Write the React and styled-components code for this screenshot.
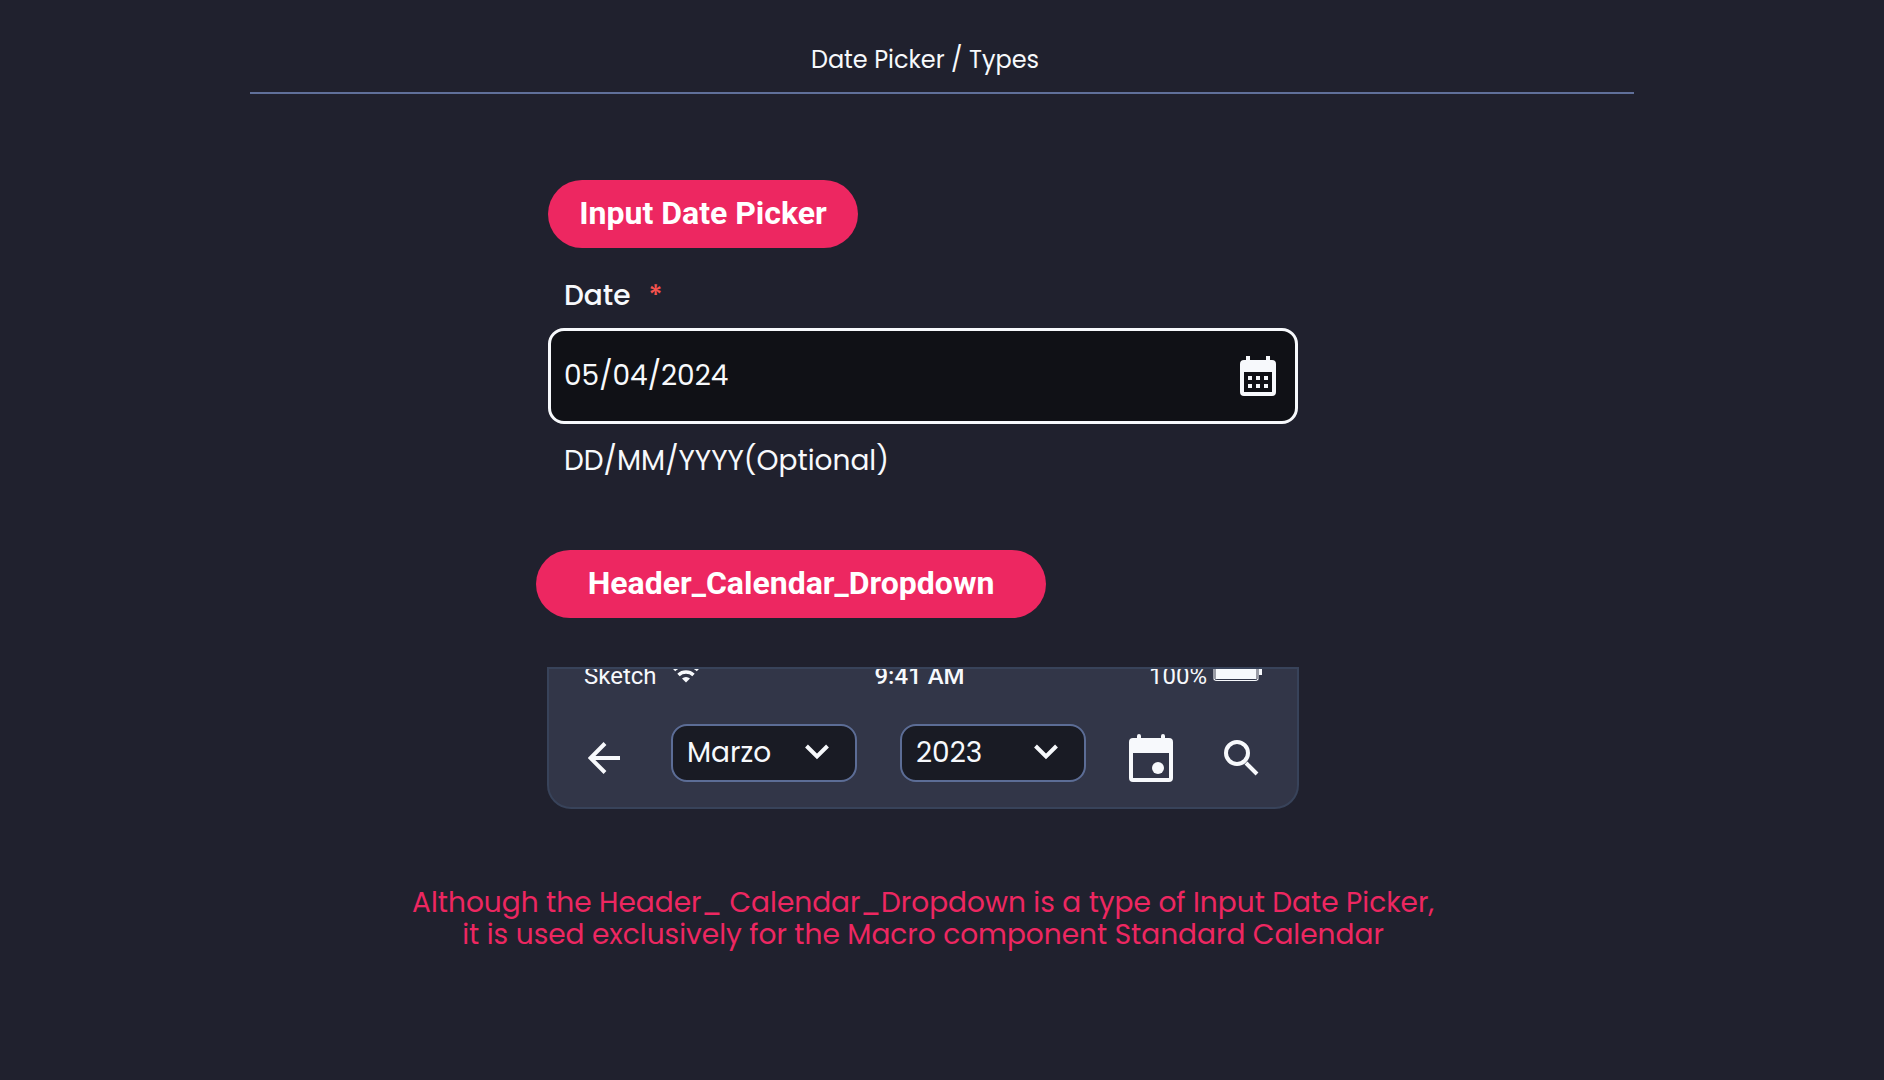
import React from "react";
import styled, { createGlobalStyle } from "styled-components";

const GlobalStyle = createGlobalStyle`
  * { box-sizing: border-box; }
  body {
    margin: 0;
    background: #20212e;
    color: #f7f9fc;
    font-family: Poppins, Inter, "Open Sans", sans-serif;
    font-weight: 400;
  }
`;

const Page = styled.div`
  min-height: 100vh;
  display: flex;
  flex-direction: column;
  align-items: center;
`;

const Header = styled.header`
  width: 100%;
  max-width: 1384px;
  padding: 40px 34px 12px 0;
  border-bottom: 2px solid #60709a;
  text-align: center;
`;

const Title = styled.h1`
  margin: 0;
  font-size: 24px;
  line-height: 40px;
  font-weight: 400;
`;

const Main = styled.main`
  width: 100%;
  max-width: 1384px;
  padding: 86px 38px 0 0;
  display: flex;
  flex-direction: column;
  align-items: center;
`;

const Section = styled.section`
  width: 100%;
  max-width: 750px;
  display: flex;
  flex-direction: column;
  align-items: stretch;
  margin-bottom: ${(p) => p.$gap}px;
`;

const Badge = styled.h2`
  align-self: flex-start;
  margin: 0 0 0 ${(p) => p.$shift || 0}px;
  width: ${(p) => p.$width}px;
  height: 68px;
  border-radius: 34px;
  background: #ed2761;
  color: #ffffff;
  font: 700 32px/66px Roboto, sans-serif;
  text-align: center;
  white-space: nowrap;
`;

const Label = styled.label`
  display: flex;
  gap: 18px;
  padding: 28px 16px 12px;
  font-size: 28px;
  line-height: 40px;
  font-weight: 500;
`;

const Required = styled.span`
  color: #f4524d;
`;

const Field = styled.div`
  display: flex;
  align-items: center;
  height: 96px;
  padding: 0 19px 0 13px;
  border: 3px solid #f7f9fc;
  border-radius: 16px;
  background: #101116;
`;

const DateInput = styled.input`
  flex: 1;
  min-width: 0;
  padding: 0;
  border: 0;
  outline: 0;
  background: transparent;
  color: inherit;
  font: inherit;
  font-size: 28px;
`;

const IconButton = styled.button`
  display: flex;
  align-items: center;
  height: 48px;
  padding: 0;
  border: 0;
  background: transparent;
  color: inherit;
`;

const Hint = styled.p`
  margin: 0;
  padding: 16px 16px 0;
  font-size: 28px;
  line-height: 42px;
`;

const Calendar = styled.div`
  margin: 49px -1px 0;
  height: 142px;
  border: 2px solid #38435a;
  border-radius: 0 0 24px 24px;
  background: #323648;
  overflow: hidden;
`;

const StatusBar = styled.div`
  display: grid;
  grid-template-columns: 1fr auto 1fr;
  margin-top: -8px;
  padding: 0 34px 0 35px;
  font: 400 24px/30px Roboto, sans-serif;
`;

const StatusGroup = styled.div`
  display: flex;
  align-items: flex-start;
  justify-content: ${(p) => (p.$end ? "flex-end" : "flex-start")};
  gap: ${(p) => (p.$end ? 6 : 16)}px;
`;

const Clock = styled.span`
  padding-right: 8px;
  font-weight: 500;
`;

const Toolbar = styled.div`
  display: flex;
  align-items: flex-end;
  justify-content: space-between;
  padding: 33px 37px 0 39px;
`;

const ToolbarCenter = styled.div`
  display: flex;
  align-items: flex-end;
  gap: 43px;
`;

const Picker = styled.div`
  position: relative;
  width: 186px;

  svg {
    position: absolute;
    top: 20px;
    right: 28px;
    pointer-events: none;
  }
`;

const Select = styled.select`
  appearance: none;
  display: block;
  width: 100%;
  height: 58px;
  padding: 0 48px 2px 14px;
  border: 2px solid #5c6d96;
  border-radius: 16px;
  background: #191b24;
  color: inherit;
  font: inherit;
  font-size: 28px;
`;

const Note = styled.p`
  margin: 0;
  color: #ed2761;
  font-size: 28px;
  line-height: 32px;
  text-align: center;
`;

function CalendarGridIcon() {
  return (
    <svg width="36" height="40" viewBox="0 0 36 40" fill="currentColor" aria-hidden="true">
      <path fillRule="evenodd" d="M6 0h4v4h16V0h4v4h2a4 4 0 0 1 4 4v28a4 4 0 0 1-4 4H4a4 4 0 0 1-4-4V8a4 4 0 0 1 4-4h2zM4 16v20h28V16z" />
      <path d="M8 20h4v4H8zM16 20h4v4h-4zM24 20h4v4h-4zM8 28h4v4H8zM16 28h4v4h-4zM24 28h4v4h-4z" />
    </svg>
  );
}

function WifiIcon() {
  return (
    <svg width="26" height="22" viewBox="0 0 26 22" fill="none" stroke="currentColor" strokeWidth="3.5" aria-hidden="true">
      <path d="M1 9a17.500 17.500 0 0 1 24 0" />
      <path d="M5.500 14a11 11 0 0 1 15 0" />
      <path d="M9 17.500a6 6 0 0 1 8 0L13 21.500z" fill="currentColor" stroke="none" />
    </svg>
  );
}

function BatteryIcon() {
  return (
    <svg width="50" height="20" viewBox="0 0 50 20" aria-hidden="true">
      <rect width="46" height="20" rx="3" fill="#9a9ca6" />
      <rect x="3" width="40" height="18" fill="#f7f9fc" />
      <path d="M2 18.500h42" stroke="#323648" />
      <path d="M1 18q1 1.500 3 1.500h38q2 0 3-1.500" fill="none" stroke="#f7f9fc" />
      <path d="M46 5h3v9h-3z" fill="#f7f9fc" />
    </svg>
  );
}

function BackIcon() {
  return (
    <svg width="32" height="32" viewBox="0 0 32 32" fill="none" stroke="currentColor" strokeWidth="4" aria-hidden="true">
      <path d="M17 1.500 2.500 16 17 30.500M3 16h29" />
    </svg>
  );
}

function ChevronIcon() {
  return (
    <svg width="24" height="16" viewBox="0 0 24 16" fill="none" stroke="currentColor" strokeWidth="4" aria-hidden="true">
      <path d="M1.500 2 12 12.500 22.500 2" />
    </svg>
  );
}

function TodayIcon() {
  return (
    <svg width="44" height="48" viewBox="0 0 44 48" fill="currentColor" aria-hidden="true">
      <path fillRule="evenodd" d="M8 2a2 2 0 0 1 4 0v2h20V2a2 2 0 0 1 4 0v2h4a4 4 0 0 1 4 4v36a4 4 0 0 1-4 4H4a4 4 0 0 1-4-4V8a4 4 0 0 1 4-4h4zM4 19v25h36V19z" />
      <circle cx="29" cy="34" r="6" />
    </svg>
  );
}

function SearchIcon() {
  return (
    <svg width="36" height="36" viewBox="0 0 36 36" fill="none" stroke="currentColor" strokeWidth="4" aria-hidden="true">
      <circle cx="13" cy="13" r="11" />
      <path d="m22 23 11 11" />
    </svg>
  );
}

function Dropdown({ label, options, selected }) {
  return (
    <Picker>
      <Select aria-label={label} defaultValue={selected}>
        {options.map((o) => (
          <option key={o}>{o}</option>
        ))}
      </Select>
      <ChevronIcon />
    </Picker>
  );
}

export default function App() {
  return (
    <Page>
      <GlobalStyle />
      <Header>
        <Title>Date Picker / Types</Title>
      </Header>
      <Main>
        <Section $gap={68}>
          <Badge $width={310}>Input Date Picker</Badge>
          <Label htmlFor="date">
            Date <Required>*</Required>
          </Label>
          <Field>
            <DateInput id="date" type="text" defaultValue="05/04/2024" />
            <IconButton type="button" aria-label="Open calendar">
              <CalendarGridIcon />
            </IconButton>
          </Field>
          <Hint>DD/MM/YYYY(Optional)</Hint>
        </Section>
        <Section $gap={78}>
          <Badge $width={510} $shift={-12}>Header_Calendar_Dropdown</Badge>
          <Calendar>
            <StatusBar>
              <StatusGroup>
                <span>Sketch</span>
                <WifiIcon />
              </StatusGroup>
              <Clock>9:41 AM</Clock>
              <StatusGroup $end>
                <span>100%</span>
                <BatteryIcon />
              </StatusGroup>
            </StatusBar>
            <Toolbar>
              <IconButton type="button" aria-label="Back">
                <BackIcon />
              </IconButton>
              <ToolbarCenter>
                <Dropdown label="Month" selected="Marzo" options={["Marzo"]} />
                <Dropdown label="Year" selected="2023" options={["2023"]} />
                <IconButton type="button" aria-label="Today">
                  <TodayIcon />
                </IconButton>
              </ToolbarCenter>
              <IconButton type="button" aria-label="Search">
                <SearchIcon />
              </IconButton>
            </Toolbar>
          </Calendar>
        </Section>
        <Note>
          Although the Header_ Calendar_Dropdown is a type of Input Date Picker,
          <br />
          it is used exclusively for the Macro component Standard Calendar
        </Note>
      </Main>
    </Page>
  );
}
